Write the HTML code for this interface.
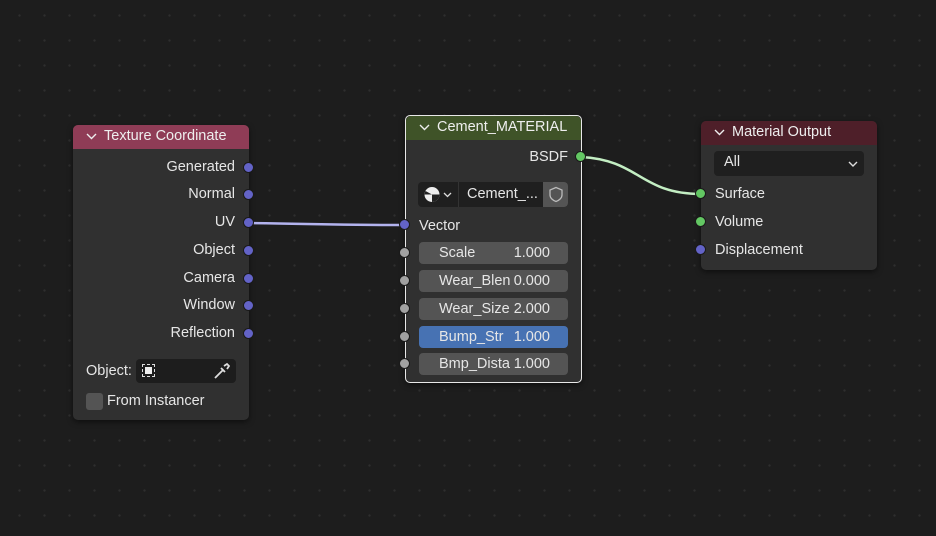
<!DOCTYPE html>
<html><head><style>
body{margin:0;width:936px;height:536px;overflow:hidden;background-color:#1d1d1d;background-image:radial-gradient(circle,#2e2e2e 1px,transparent 1.4px);background-size:25px 25px;background-position:7px 3px;font-family:"Liberation Sans","DejaVu Sans",sans-serif;font-size:14.5px;color:#e6e6e6;position:relative}
.node{position:absolute;background:#303030;border-radius:5px;box-shadow:0 2px 6px rgba(0,0,0,.5)}
.hdr{height:24px;border-radius:5px 5px 0 0;line-height:23px;padding-left:31px;font-size:14.5px;color:#eee;position:relative}
.chev{position:absolute;left:13px;top:8px}
.s{position:absolute;width:11px;height:11px;border-radius:50%;border:1px solid #1a1a1a;box-sizing:border-box}
.p{background:#6363c7}.g{background:#63c763}.gr{background:#a1a1a1}
.t{position:absolute;white-space:nowrap}
.f{position:absolute;left:14px;width:149px;height:22px;background:#545454;border-radius:4px;line-height:22px}
.f span{position:absolute}
</style></head><body>
<svg width="936" height="536" style="position:absolute;left:0;top:0">
<path d="M249 223 C320 224 330 225 405 225" stroke="#b3b3ee" stroke-width="2.5" fill="none"/>
<path d="M581 157 C640 160 640 194 701 194" stroke="#c3eec3" stroke-width="2.5" fill="none"/>
</svg>

<div class="node" style="left:73px;top:125px;width:176px;height:295px">
 <div class="hdr" style="background:#8f3c56"><svg class="chev" width="11" height="7"><path d="M1 1 L5.5 5.5 L10 1" stroke="#eee" stroke-width="1.4" fill="none"/></svg>Texture Coordinate</div>
 <div class="t" style="right:14px;top:34px">Generated</div>
 <div class="t" style="right:14px;top:61px">Normal</div>
 <div class="t" style="right:14px;top:89px">UV</div>
 <div class="t" style="right:14px;top:117px">Object</div>
 <div class="t" style="right:14px;top:145px">Camera</div>
 <div class="t" style="right:14px;top:172px">Window</div>
 <div class="t" style="right:14px;top:200px">Reflection</div>
 <div class="t" style="left:13px;top:238px">Object:</div>
 <div style="position:absolute;left:63px;top:234px;width:100px;height:24px;background:#1d1d1d;border-radius:4px">
  <div style="position:absolute;left:6px;top:5px;width:13px;height:13px;border:1px dashed #ddd;box-sizing:border-box"></div>
  <div style="position:absolute;left:9px;top:8px;width:7px;height:7px;background:#eee"></div>
  <svg style="position:absolute;left:76px;top:3px" width="18" height="18"><path d="M3 16 L11 8 M9 6 L13 10 M12 4 L15 2 L17 4 L15 7" stroke="#ddd" stroke-width="1.8" fill="none"/></svg>
 </div>
 <div style="position:absolute;left:13px;top:268px;width:17px;height:17px;background:#545454;border-radius:3px"></div>
 <div class="t" style="left:34px;top:268px">From Instancer</div>
</div>
<div class="s p" style="left:243px;top:162px"></div>
<div class="s p" style="left:243px;top:189px"></div>
<div class="s p" style="left:243px;top:217px"></div>
<div class="s p" style="left:243px;top:245px"></div>
<div class="s p" style="left:243px;top:273px"></div>
<div class="s p" style="left:243px;top:300px"></div>
<div class="s p" style="left:243px;top:328px"></div>

<div class="node" style="left:405px;top:115px;width:177px;height:268px;outline:1px solid #e8e8e8;outline-offset:-1px">
 <div class="hdr" style="background:#3f5328;margin:1px 1px 0;line-height:22px;padding-left:31px"><svg class="chev" width="11" height="7"><path d="M1 1 L5.5 5.5 L10 1" stroke="#eee" stroke-width="1.4" fill="none"/></svg>Cement_MATERIAL</div>
 <div class="t" style="right:14px;top:34px">BSDF</div>
 <div style="position:absolute;left:13px;top:67px;width:150px;height:25px;background:#1f1f1f;border-radius:4px">
  <svg style="position:absolute;left:5px;top:4px" width="34" height="17"><circle cx="9" cy="8.5" r="7.5" fill="#eee"/><path d="M9 8.5 L16.5 8.5 A7.5 7.5 0 0 1 9 16 Z M9 8.5 L1.5 8.5 A7.5 7.5 0 0 1 2.5 5 Z" fill="#222"/><path d="M21 7 L24.5 10.5 L28 7" stroke="#ddd" stroke-width="1.3" fill="none"/></svg>
  <div style="position:absolute;left:40px;top:0;width:1px;height:25px;background:#333"></div>
  <span style="position:absolute;left:49px;top:4px">Cement_...</span>
  <div style="position:absolute;right:0;top:0;width:25px;height:25px;background:#545454;border-radius:0 4px 4px 0"><svg style="position:absolute;left:5px;top:4px" width="16" height="17"><path d="M8 1.5 L14 4 L14 9 C14 12 11 14.5 8 15.5 C5 14.5 2 12 2 9 L2 4 Z" stroke="#bbb" stroke-width="1.3" fill="none"/></svg></div>
 </div>
 <div class="t" style="left:14px;top:103px">Vector</div>
 <div class="f" style="top:127px"><span style="left:20px">Scale</span><span style="right:18px">1.000</span></div>
 <div class="f" style="top:155px"><span style="left:20px">Wear_Blen</span><span style="right:18px">0.000</span></div>
 <div class="f" style="top:183px"><span style="left:20px">Wear_Size</span><span style="right:18px">2.000</span></div>
 <div class="f" style="top:211px;background:#4772b3"><span style="left:20px">Bump_Str</span><span style="right:18px">1.000</span></div>
 <div class="f" style="top:238px"><span style="left:20px">Bmp_Dista</span><span style="right:18px">1.000</span></div>
</div>
<div class="s g" style="left:575px;top:151px"></div>
<div class="s p" style="left:399px;top:219px"></div>
<div class="s gr" style="left:399px;top:247px"></div>
<div class="s gr" style="left:399px;top:275px"></div>
<div class="s gr" style="left:399px;top:303px"></div>
<div class="s gr" style="left:399px;top:331px"></div>
<div class="s gr" style="left:399px;top:358px"></div>

<div class="node" style="left:701px;top:121px;width:176px;height:149px">
 <div class="hdr" style="background:#4e1f29"><svg class="chev" width="11" height="7"><path d="M1 1 L5.5 5.5 L10 1" stroke="#eee" stroke-width="1.4" fill="none"/></svg>Material Output</div>
 <div style="position:absolute;left:13px;top:30px;width:150px;height:25px;background:#1f1f1f;border-radius:4px">
  <span style="position:absolute;left:10px;top:3px">All</span>
  <svg style="position:absolute;right:6px;top:10px" width="10" height="7"><path d="M1 1 L5 5 L9 1" stroke="#ddd" stroke-width="1.4" fill="none"/></svg>
 </div>
 <div class="t" style="left:14px;top:65px">Surface</div>
 <div class="t" style="left:14px;top:93px">Volume</div>
 <div class="t" style="left:14px;top:121px">Displacement</div>
</div>
<div class="s g" style="left:695px;top:188px"></div>
<div class="s g" style="left:695px;top:216px"></div>
<div class="s p" style="left:695px;top:244px"></div>
</body></html>
